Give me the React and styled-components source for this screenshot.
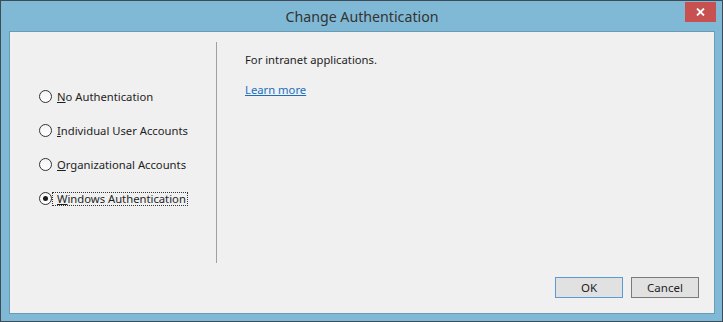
import React from "react";
import styled, { createGlobalStyle } from "styled-components";

const Global = createGlobalStyle`
  html, body { margin: 0; padding: 0; background: #7fb8d4; }
  body { font-family: "Noto Sans", "Open Sans", sans-serif; }
`;

const Window = styled.div`
  width: 723px;
  height: 322px;
  box-sizing: border-box;
  border: 1px solid #3f4a54;
  background: #80b9d5;
  padding: 0 7px 7px 8px;
  display: flex;
  flex-direction: column;
`;

const TitleBar = styled.div`
  height: 30px;
  display: grid;
  grid-template-columns: 1fr auto 1fr;
  align-items: center;
`;

const Title = styled.div`
  grid-column: 2;
  font-family: "Noto Sans", sans-serif;
  font-size: 14.2px;
  color: #333;
  padding-top: 1px;
`;

const CloseButton = styled.button`
  grid-column: 3;
  justify-self: end;
  align-self: start;
  margin: 1px -1px 0 0;
  width: 31px;
  height: 20px;
  border: none;
  padding: 0;
  background: #c75050;
  display: flex;
  align-items: center;
  justify-content: center;
`;

const Client = styled.div`
  flex: 1;
  box-sizing: border-box;
  border: 1px solid #6a9bb5;
  background: #f0f0f0;
  display: flex;
  flex-direction: column;
  font-family: "Noto Sans", sans-serif;
  font-size: 11.25px;
  color: #1e1e1e;
`;

const Main = styled.div`
  display: flex;
  padding-top: 10px;
`;

const Options = styled.div`
  width: 206px;
  box-sizing: border-box;
  padding: 48px 0 0 29px;
  display: flex;
  flex-direction: column;
  gap: 21px;
`;

const Divider = styled.div`
  width: 1px;
  height: 221px;
  background: #a0a0a0;
`;

const Info = styled.div`
  padding: 10px 0 0 28px;
  display: flex;
  flex-direction: column;
  gap: 14px;
`;

const Line = styled.div`
  height: 16px;
  line-height: 16px;
`;

const Link = styled.a`
  color: #1a6fbf;
  text-decoration: underline;
  line-height: 16px;
  height: 16px;
  cursor: pointer;
`;

const Option = styled.label`
  display: flex;
  align-items: center;
  height: 13px;
`;

const Radio = styled.span`
  width: 13px;
  height: 13px;
  box-sizing: border-box;
  border-radius: 50%;
  border: 1px solid #333;
  background: linear-gradient(#f4f4f4, #ffffff);
  display: flex;
  align-items: center;
  justify-content: center;
  flex: none;
`;

const Dot = styled.span`
  width: 5px;
  height: 5px;
  border-radius: 50%;
  background: #1a1a1a;
`;

const LabelText = styled.span`
  box-sizing: border-box;
  height: 14px;
  line-height: 12px;
  padding: 0 1px 0 4px;
  border: 1px dotted ${(p) => (p.$focused ? "#333" : "transparent")};
  white-space: nowrap;
`;

const Buttons = styled.div`
  margin-top: auto;
  display: flex;
  justify-content: flex-end;
  gap: 8px;
  padding: 0 15px 15px 0;
`;

const Button = styled.button`
  width: 68px;
  height: 21px;
  box-sizing: border-box;
  border: 1px solid ${(p) => (p.$default ? "#5b9bd5" : "#7a7a7a")};
  background: #e1e1e1;
  font-family: "Noto Sans", sans-serif;
  font-size: 11.5px;
  color: #1e1e1e;
  padding: 0;
`;

const options = [
  { u: "N", rest: "o Authentication" },
  { u: "I", rest: "ndividual User Accounts" },
  { u: "O", rest: "rganizational Accounts" },
  { u: "W", rest: "indows Authentication", selected: true },
];

export default function App() {
  return (
    <>
      <Global />
      <Window>
        <TitleBar>
          <Title>Change Authentication</Title>
          <CloseButton aria-label="Close">
            <svg width="9" height="8" viewBox="0 0 9 8">
              <path d="M1 0.5 L8 7.5 M8 0.5 L1 7.5" stroke="#fff" strokeWidth="1.8" />
            </svg>
          </CloseButton>
        </TitleBar>
        <Client>
          <Main>
            <Options>
              {options.map((o) => (
                <Option key={o.u}>
                  <Radio>{o.selected && <Dot />}</Radio>
                  <LabelText $focused={o.selected}>
                    <u>{o.u}</u>
                    {o.rest}
                  </LabelText>
                </Option>
              ))}
            </Options>
            <Divider />
            <Info>
              <Line>For intranet applications.</Line>
              <Line>
                <Link>Learn more</Link>
              </Line>
            </Info>
          </Main>
          <Buttons>
            <Button $default>OK</Button>
            <Button>Cancel</Button>
          </Buttons>
        </Client>
      </Window>
    </>
  );
}
